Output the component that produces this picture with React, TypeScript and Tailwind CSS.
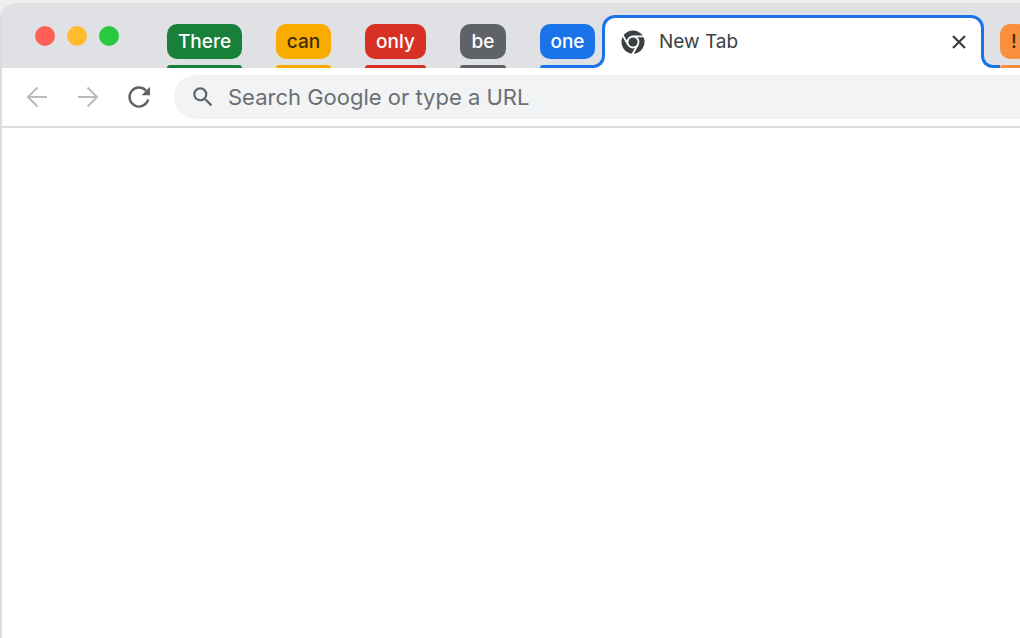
import React from "react";
import { MdSearch } from "react-icons/md";

interface TabGroup {
    name: string;
    chip: string;
    line: string;
}

const groups: TabGroup[] = [
    { name: "There", chip: "w-[75px] bg-[#188038] text-white", line: "bg-[#188038]" },
    { name: "can", chip: "w-[55px] bg-[#f9ab00] text-[#3c2f0c]", line: "bg-[#f9ab00]" },
    { name: "only", chip: "w-[61px] bg-[#d93025] text-white", line: "bg-[#d93025]" },
    { name: "be", chip: "w-[46px] bg-[#5f6368] text-white", line: "bg-[#5f6368]" },
    { name: "one", chip: "w-[55px] bg-[#1a73e8] text-white", line: "bg-[#1a73e8]" },
];

const GroupChip: React.FC<{ group: TabGroup }> = ({ group }) => (
    <div className="flex shrink-0 flex-col justify-between pt-[21px]">
        <button
            type="button"
            className={`h-[35px] rounded-[10px] text-center text-[19px] leading-[35px] font-medium ${group.chip}`}
        >
            {group.name}
        </button>
        <div className={`h-[3px] rounded-t-[3px] ${group.line}`} />
    </div>
);

const ChromeIcon = () => (
    <svg viewBox="0 0 24 24" className="size-6 shrink-0" aria-hidden="true">
        <circle cx="12" cy="12" r="11.5" fill="#3c4043" />
        <circle cx="12" cy="12" r="6.4" fill="#fff" />
        <g stroke="#fff" strokeWidth="1.8">
            <path d="M12 6.400H24" />
            <path d="M12 6.400H24" transform="rotate(120 12 12)" />
            <path d="M12 6.400H24" transform="rotate(240 12 12)" />
        </g>
        <circle cx="12" cy="12" r="4.600" fill="#3c4043" />
    </svg>
);

const Arrow: React.FC<{ d: string }> = ({ d }) => (
    <svg viewBox="0 0 24 24" className="size-6" fill="none" stroke="#b9bbbe" strokeWidth="2" aria-hidden="true">
        <path d={d} />
    </svg>
);

const ReloadIcon = () => (
    <svg viewBox="0 0 24 24" className="size-6" aria-hidden="true">
        <path
            d="M21.200 14.500A9.500 9.500 0 1 1 19 5.600"
            fill="none"
            stroke="#5f6368"
            strokeWidth="2.4"
        />
        <path d="M23 1.800V10.300H14.500z" fill="#5f6368" />
    </svg>
);

const ActiveTab = () => (
    <div className="relative mt-3 ml-[7px] flex w-[382px] shrink-0 items-center rounded-t-[13px] border-x-[3px] border-t-[3px] border-[#1a73e8] bg-white px-4 pb-[3px]">
        <ChromeIcon />
        <span className="ml-[14px] flex-1 text-[19px] leading-6 text-[#3c4043]">New Tab</span>
        <button type="button" aria-label="Close tab" className="-mr-1 flex size-5 items-center justify-center">
            <svg viewBox="0 0 20 20" className="size-5" fill="none" stroke="#3c4043" strokeWidth="2.2">
                <path d="M4 4l12 12M16 4L4 16" />
            </svg>
        </button>
        {/* curved feet of the tab */}
        <div className="absolute bottom-0 -left-3 size-3 bg-white">
            <div className="size-full rounded-br-[12px] border-r-[3px] border-b-[3px] border-[#1a73e8] bg-[#dfe1e5]" />
        </div>
        <div className="absolute -right-[19px] bottom-0 h-3 w-[19px] bg-white">
            <div className="size-full rounded-bl-[12px] border-b-[3px] border-l-[3px] border-[#1a73e8] bg-[#dfe1e5]" />
        </div>
    </div>
);

const App: React.FC = () => {
    return (
        <div className="flex min-h-screen flex-col bg-[#eeefef] pt-[3px] font-['Inter','Liberation_Sans',sans-serif]">
            <div className="flex flex-1 flex-col overflow-hidden rounded-tl-[16px] border-l-2 border-[#dcdcdc] bg-white">
                <header className="flex h-[65px] overflow-hidden bg-[#dfe1e5]">
                    <div className="mr-12 ml-[33px] flex shrink-0 items-center gap-3">
                        <button type="button" aria-label="Close" className="size-5 rounded-full bg-[#ff5f57]" />
                        <button type="button" aria-label="Minimize" className="size-5 rounded-full bg-[#febc2e]" />
                        <button type="button" aria-label="Zoom" className="size-5 rounded-full bg-[#28c840]" />
                    </div>
                    <div className="flex gap-[34px]">
                        {groups.map((group) => (
                            <GroupChip key={group.name} group={group} />
                        ))}
                    </div>
                    <ActiveTab />
                    <div className="ml-4 flex shrink-0">
                        <GroupChip
                            group={{ name: "!", chip: "w-[28px] bg-[#fa903e] text-[#3c2f0c]", line: "bg-[#fa903e]" }}
                        />
                    </div>
                </header>
                <div className="flex h-[60px] items-center border-b-2 border-[#dcdddf] pl-[23px]">
                    <button type="button" aria-label="Back" className="mr-[27px]">
                        <Arrow d="M22 12H3M12.500 2.500L3 12l9.500 9.500" />
                    </button>
                    <button type="button" aria-label="Forward" className="mr-[27px]">
                        <Arrow d="M2 12H21M11.500 2.500L21 12l-9.500 9.500" />
                    </button>
                    <button type="button" aria-label="Reload" className="mr-[23px]">
                        <ReloadIcon />
                    </button>
                    <label className="flex h-11 flex-1 items-center rounded-l-full bg-[#f1f3f4] pl-4">
                        <MdSearch className="mr-3 size-[26px] shrink-0 text-[#5f6368]" />
                        <input
                            type="text"
                            aria-label="Address and search bar"
                            placeholder="Search Google or type a URL"
                            className="w-full bg-transparent text-[22px] leading-7 text-[#3c4043] outline-none placeholder:text-[#6b6f73]"
                        />
                    </label>
                </div>
                <main className="flex-1 bg-white" />
            </div>
        </div>
    );
};

export default App;
